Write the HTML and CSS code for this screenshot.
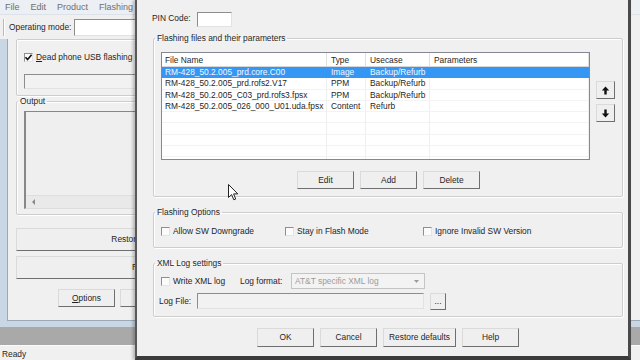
FILE: index.html
```html
<!DOCTYPE html>
<html lang="en">
<head>
    <meta charset="UTF-8">
    <title>Flashing options</title>
    <link rel="stylesheet" href="styles.css">
</head>
<body>
    <!-- main application window (behind the dialog) -->
    <div class="app">
        <div class="menubar">
            <span>File</span><span>Edit</span><span>Product</span><span>Flashing</span>
        </div>
        <div class="toolbar">
            <span class="grip"></span>
            <span class="tool-label">Operating mode:</span>
            <span class="edit mode-box"></span>
        </div>
        <div class="workspace">
            <div class="child">
                <div class="panel">
                    <fieldset class="grp usb">
                        <div class="check">
                            <span class="cb">
                                <svg width="9" height="9" viewBox="0 0 9 9"><path d="M1.5 4.2 L3.6 6.6 L7.6 1.8" fill="none" stroke="#111" stroke-width="1.6"/></svg>
                            </span>
                            <span><u>D</u>ead phone USB flashing</span>
                        </div>
                        <div class="edit disabled usb-field"></div>
                    </fieldset>
                    <fieldset class="grp output">
                        <legend>Output</legend>
                        <div class="output-box">
                            <div class="hscroll">
                                <svg width="5" height="6" viewBox="0 0 5 6"><polygon points="4,0 4,6 1,3" fill="#8a8a8a"/></svg>
                            </div>
                        </div>
                    </fieldset>
                    <button class="btn wide restore">Restore</button>
                    <button class="btn wide reset">Reset</button>
                    <div class="app-buttons">
                        <button class="btn"><u>O</u>ptions</button>
                        <button class="btn"></button>
                    </div>
                </div>
            </div>
        </div>
        <div class="statusbar">Ready</div>
    </div>

    <!-- flashing options dialog -->
    <div class="dialog">
        <div class="pin-row">
            <span class="pin-label">PIN Code:</span>
            <span class="edit pin"></span>
        </div>

        <fieldset class="grp files">
            <legend>Flashing files and their parameters</legend>
            <div class="files-body">
                <div class="listview">
                    <div class="lv-row lv-head">
                        <span class="c-name">File Name</span><span class="c-type">Type</span><span class="c-use">Usecase</span><span class="c-par">Parameters</span>
                    </div>
                    <div class="lv-row selected">
                        <span class="c-name">RM-428_50.2.005_prd.core.C00</span><span class="c-type">Image</span><span class="c-use">Backup/Refurb</span><span class="c-par"></span>
                    </div>
                    <div class="lv-row">
                        <span class="c-name">RM-428_50.2.005_prd.rofs2.V17</span><span class="c-type">PPM</span><span class="c-use">Backup/Refurb</span><span class="c-par"></span>
                    </div>
                    <div class="lv-row">
                        <span class="c-name">RM-428_50.2.005_C03_prd.rofs3.fpsx</span><span class="c-type">PPM</span><span class="c-use">Backup/Refurb</span><span class="c-par"></span>
                    </div>
                    <div class="lv-row">
                        <span class="c-name">RM-428_50.2.005_026_000_U01.uda.fpsx</span><span class="c-type">Content</span><span class="c-use">Refurb</span><span class="c-par"></span>
                    </div>
                    <div class="lv-row"><span class="c-name"></span><span class="c-type"></span><span class="c-use"></span><span class="c-par"></span></div>
                    <div class="lv-row"><span class="c-name"></span><span class="c-type"></span><span class="c-use"></span><span class="c-par"></span></div>
                    <div class="lv-row"><span class="c-name"></span><span class="c-type"></span><span class="c-use"></span><span class="c-par"></span></div>
                    <div class="lv-row"><span class="c-name"></span><span class="c-type"></span><span class="c-use"></span><span class="c-par"></span></div>
                    <div class="lv-row"><span class="c-name"></span><span class="c-type"></span><span class="c-use"></span><span class="c-par"></span></div>
                </div>
                <div class="updown">
                    <button class="btn arrow" title="Move up">
                        <svg width="9" height="9" viewBox="0 0 9 9"><path d="M4.5 0.5 L0.8 4.6 H3.3 V8.5 H5.7 V4.6 H8.2 Z" fill="#111"/></svg>
                    </button>
                    <button class="btn arrow" title="Move down">
                        <svg width="9" height="9" viewBox="0 0 9 9"><path d="M4.5 8.5 L0.8 4.4 H3.3 V0.5 H5.7 V4.4 H8.2 Z" fill="#111"/></svg>
                    </button>
                </div>
            </div>
            <div class="btn-row">
                <button class="btn">Edit</button>
                <button class="btn">Add</button>
                <button class="btn">Delete</button>
            </div>
        </fieldset>

        <fieldset class="grp options">
            <legend>Flashing Options</legend>
            <div class="option-grid">
                <div class="check"><span class="cb"></span><span>Allow SW Downgrade</span></div>
                <div class="check"><span class="cb"></span><span>Stay in Flash Mode</span></div>
                <div class="check"><span class="cb"></span><span>Ignore Invalid SW Version</span></div>
            </div>
        </fieldset>

        <fieldset class="grp xml">
            <legend>XML Log settings</legend>
            <div class="xml-row">
                <div class="check write-log"><span class="cb"></span><span>Write XML log</span></div>
                <span class="log-format">Log format:</span>
                <div class="combo">
                    <span>AT&amp;T specific XML log</span>
                    <svg width="5" height="3" viewBox="0 0 5 3"><polygon points="0,0 5,0 2.5,3" fill="#9a9a9a"/></svg>
                </div>
            </div>
            <div class="xml-row">
                <span class="log-file">Log File:</span>
                <span class="edit disabled log-path"></span>
                <button class="btn browse">...</button>
            </div>
        </fieldset>

        <div class="btn-row dialog-buttons">
            <button class="btn">OK</button>
            <button class="btn">Cancel</button>
            <button class="btn restore-defaults">Restore defaults</button>
            <button class="btn">Help</button>
        </div>
    </div>

    <svg class="pointer" width="11" height="17" viewBox="0 0 11 17">
        <path d="M0.5 0.5 V13.5 L3.6 10.6 L5.8 15.8 L7.7 15 L5.6 9.9 H9.8 Z" fill="#fff" stroke="#222" stroke-width="1"/>
    </svg>
</body>
</html>
```

FILE: styles.css
```css
* { box-sizing: border-box; }
body { margin: 0; width: 640px; height: 360px; overflow: hidden; position: relative; background: #c3c3c3; font-family: 'Liberation Sans', Arial, sans-serif; font-size: 8.4px; line-height: 11px; color: #1f1f1f; }
button { font: inherit; color: inherit; margin: 0; padding: 0; }

/* ---------- application window ---------- */
.app { width: 640px; height: 360px; display: flex; flex-direction: column; background: #f0f0f0; }
.menubar { height: 15px; flex: none; display: flex; align-items: center; gap: 11px; padding-left: 5px; font-size: 9px; color: #6f6f6f; background: #eceff3; border-bottom: 1px solid #dde2e8; }
.toolbar { height: 24px; flex: none; display: flex; align-items: center; padding-left: 3px; background: #f0f0f0; }
.grip { width: 2px; height: 17px; border-left: 1px solid #b9b9b9; border-right: 1px solid #fff; margin-right: 4px; }
.tool-label { width: 65px; }
.mode-box { width: 200px; height: 17px; }
.edit { display: block; background: #fff; border: 1px solid; border-color: #8d8d8d #e2e2e2 #e2e2e2 #8d8d8d; }
.edit.disabled { background: #f2f2f2; }

.workspace { flex: 1; display: flex; flex-direction: column; background: #a9a9a9; padding-bottom: 18px; }
.child { flex: 1; border: solid #c9d6e4; border-width: 0 0 6px 7px; }
.panel { height: 100%; background: #f0f0f0; border-left: 1px solid #9ba8b6; border-bottom: 1px solid #9ba8b6; padding-left: 8px; display: flex; flex-direction: column; align-items: flex-start; }
.statusbar { height: 15px; flex: none; padding-left: 2px; line-height: 17px; background: #f0f0f0; border-top: 1px solid #fafafa; }

.grp { margin: 0; min-width: 0; border: 1px solid #cdcdcd; border-radius: 2px; box-shadow: inset 1px 1px 0 #fff, 1px 1px 0 #fff; }
.grp legend { padding: 0 2px; margin-left: -6px; line-height: 10px; }

.usb { width: 300px; height: 57px; padding: 12px 7px 5px; }
.usb-field { width: 200px; height: 15px; margin-top: 11px; }
.output { width: 300px; padding: 5px 7px 5px; }
.output-box { height: 98px; border: 1px solid; border-color: #888 #ddd #ddd #888; border-left-width: 2px; background: #efefef; display: flex; align-items: flex-end; }
.hscroll { width: 100%; height: 13px; background: #e9e9e9; border-top: 1px solid #dedede; display: flex; align-items: center; padding-left: 5px; }

.btn { display: flex; align-items: center; justify-content: center; height: 18px; width: 57px; background: #efefef; border: 1px solid; border-color: #dadada #6f6f6f #6f6f6f #dadada; cursor: default; }
.btn.wide { height: 23px; }
.restore { width: 220px; margin-top: 13px; }
.reset { width: 254px; height: 26px; margin-top: 5px; }
.app-buttons { display: flex; gap: 5px; margin-top: 10px; margin-left: 42px; }

.check { display: flex; align-items: center; gap: 3px; height: 11px; white-space: nowrap; }
.cb { width: 9px; height: 9px; flex: none; background: #fbfbfb; border: 1px solid; border-color: #8e8e8e #e4e4e4 #e4e4e4 #8e8e8e; display: flex; }
.cb svg { margin: -1px; }

/* ---------- dialog ---------- */
.dialog { position: absolute; left: 135px; top: 0; width: 496px; height: 360px; background: #f0f0f0; border: solid; border-color: #595959 #4a4a4a #3b3b3b #595959; border-width: 0 3px 4px 2px; padding: 12px 5px 0 16px; box-shadow: -2px 0 3px rgba(0, 0, 0, 0.25); }
.pin-row { display: flex; align-items: center; height: 15px; margin-left: -1px; }
.pin-label { width: 45px; padding-bottom: 3px; }
.pin { width: 35px; height: 15px; }

.files { margin-top: 6px; padding: 9px 6px 7px 7px; }
.files-body { display: flex; }
.listview { width: 429px; height: 108px; flex: none; overflow: hidden; background: #fff; border: 1px solid #838893; }
.lv-row { display: flex; height: 11.3px; line-height: 11px; white-space: nowrap; }
.lv-row span { overflow: hidden; padding-left: 4px; border-right: 1px solid #efefef; border-bottom: 1px solid #f3f3f3; }
.lv-head { height: 14px; line-height: 14px; }
.lv-head span { border-right-color: #e0e0e0; border-bottom-color: #d6d6d6; }
.c-name { width: 165px; flex: none; padding-left: 3px !important; }
.c-type { width: 39px; flex: none; }
.c-use { width: 64px; flex: none; }
.c-par { flex: 1; }
.selected { background: #3597f4; color: #f4f8ff; }
.selected span { border-color: #3597f4; }
.updown { display: flex; flex-direction: column; gap: 5px; padding-top: 29px; margin-left: 6px; }
.arrow { width: 19px; height: 18px; }

.btn-row { display: flex; justify-content: center; gap: 6px; }
.files .btn-row { margin-top: 11px; }
.options { margin-top: 10px; padding: 9px 7px 10px; }
.option-grid { display: grid; grid-template-columns: 124px 138px 1fr; }
.xml { margin-top: 10px; padding: 5px 7px 7px; display: flex; flex-direction: column; gap: 4px; }
.xml-row { display: flex; align-items: center; height: 16px; }
.write-log { width: 79px; }
.log-format { width: 51px; }
.combo { width: 134px; height: 16px; display: flex; align-items: center; justify-content: space-between; padding: 0 5px 0 3px; background: #f3f3f3; border: 1px solid #c4c4c4; color: #9b9b9b; }
.log-file { width: 38px; margin-left: -2px; }
.log-path { width: 227px; height: 16px; }
.browse { width: 16px; height: 17px; margin-left: 6px; line-height: 8px; align-items: flex-end; padding-bottom: 4px; }
.dialog-buttons { margin-top: 11px; width: 470px; }
.dialog-buttons .btn { height: 19px; }
.restore-defaults { width: 73px !important; }

.pointer { position: absolute; left: 228px; top: 184px; }
```
